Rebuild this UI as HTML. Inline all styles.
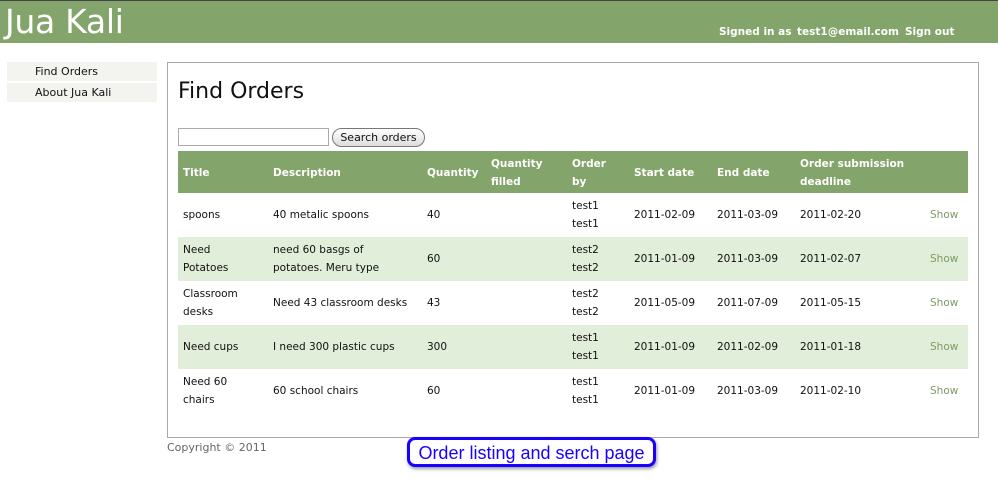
<!DOCTYPE html>
<html><head><meta charset="utf-8"><style>
*{margin:0;padding:0;box-sizing:border-box}
body{width:998px;height:479px;background:#fff;font-family:"DejaVu Sans","Liberation Sans",sans-serif;font-size:10.5px;color:#111;position:relative;overflow:hidden}
.hdr{position:absolute;left:0;top:0;width:998px;height:43px;background:#83a46a;border-top:1px solid #444}
.logo{position:absolute;left:5px;top:1px;font-size:33px;color:#fff;letter-spacing:-0.3px}
.sign{position:absolute;top:25px;color:#fff;font-weight:bold;font-size:10.5px;letter-spacing:0px}
.nav{position:absolute;left:7px;width:150px;height:19px;background:#f3f3ef;padding-left:28px;line-height:19px;font-size:11px}
.box{position:absolute;left:167px;top:62px;width:812px;height:376px;border:1px solid #aaa}
h1{position:absolute;left:178px;top:79px;font-size:22px;font-weight:normal;color:#111}
.inp{position:absolute;left:178px;top:128px;width:151px;height:18px;border:1px solid #aaa}
.btn{position:absolute;left:332px;top:128px;width:93px;height:19px;border:1px solid #777;border-radius:10px;background:linear-gradient(#fff,#ddd);font-size:11px;text-align:center;line-height:17px}
.th{position:absolute;left:178px;top:151px;width:790px;height:42px;background:#83a46a}
.row{position:absolute;left:178px;width:790px;height:44px}
.alt{background:#e1eed9}
.c{position:absolute;line-height:18px;margin-top:1px}
.w{color:#fff;font-weight:bold}
.show{color:#7f9a63}
.copy{position:absolute;left:167px;top:441px;color:#666;font-size:11px}
.call{position:absolute;left:407px;top:437px;width:249px;height:30px;border:3px solid #1a00ff;border-radius:8px;color:#1a00ff;font-family:"Liberation Sans",sans-serif;font-size:18px;text-align:center;line-height:27px;background:#fff;box-shadow:1px 2px 3px #999}
</style></head><body>
<div class="hdr"><div class="logo">Jua Kali</div>
<div class="sign" style="left:719px">Signed in as</div>
<div class="sign" style="left:797px">test1@email.com</div>
<div class="sign" style="left:905px">Sign out</div></div>
<div class="nav" style="top:62px">Find Orders</div>
<div class="nav" style="top:83px">About Jua Kali</div>
<div class="box"></div>
<h1>Find Orders</h1>
<div class="inp"></div><div class="btn">Search orders</div>
<div class="th"></div>
<div class="c w" style="left:183px;top:163px">Title</div>
<div class="c w" style="left:273px;top:163px">Description</div>
<div class="c w" style="left:427px;top:163px">Quantity</div>
<div class="c w" style="left:491px;top:154px">Quantity<br>filled</div>
<div class="c w" style="left:572px;top:154px">Order<br>by</div>
<div class="c w" style="left:634px;top:163px">Start date</div>
<div class="c w" style="left:717px;top:163px">End date</div>
<div class="c w" style="left:800px;top:154px">Order submission<br>deadline</div>

<div class="row" style="top:193px"></div>
<div class="row alt" style="top:237px"></div>
<div class="row" style="top:281px"></div>
<div class="row alt" style="top:325px"></div>
<div class="row" style="top:369px"></div>

<div class="c" style="left:183px;top:205px">spoons</div>
<div class="c" style="left:273px;top:205px">40 metalic spoons</div>
<div class="c" style="left:427px;top:205px">40</div>
<div class="c" style="left:572px;top:196px">test1<br>test1</div>
<div class="c" style="left:634px;top:205px">2011-02-09</div>
<div class="c" style="left:717px;top:205px">2011-03-09</div>
<div class="c" style="left:800px;top:205px">2011-02-20</div>
<div class="c show" style="left:930px;top:205px">Show</div>

<div class="c" style="left:183px;top:240px">Need<br>Potatoes</div>
<div class="c" style="left:273px;top:240px">need 60 basgs of<br>potatoes. Meru type</div>
<div class="c" style="left:427px;top:249px">60</div>
<div class="c" style="left:572px;top:240px">test2<br>test2</div>
<div class="c" style="left:634px;top:249px">2011-01-09</div>
<div class="c" style="left:717px;top:249px">2011-03-09</div>
<div class="c" style="left:800px;top:249px">2011-02-07</div>
<div class="c show" style="left:930px;top:249px">Show</div>

<div class="c" style="left:183px;top:284px">Classroom<br>desks</div>
<div class="c" style="left:273px;top:293px">Need 43 classroom desks</div>
<div class="c" style="left:427px;top:293px">43</div>
<div class="c" style="left:572px;top:284px">test2<br>test2</div>
<div class="c" style="left:634px;top:293px">2011-05-09</div>
<div class="c" style="left:717px;top:293px">2011-07-09</div>
<div class="c" style="left:800px;top:293px">2011-05-15</div>
<div class="c show" style="left:930px;top:293px">Show</div>

<div class="c" style="left:183px;top:337px">Need cups</div>
<div class="c" style="left:273px;top:337px">I need 300 plastic cups</div>
<div class="c" style="left:427px;top:337px">300</div>
<div class="c" style="left:572px;top:328px">test1<br>test1</div>
<div class="c" style="left:634px;top:337px">2011-01-09</div>
<div class="c" style="left:717px;top:337px">2011-02-09</div>
<div class="c" style="left:800px;top:337px">2011-01-18</div>
<div class="c show" style="left:930px;top:337px">Show</div>

<div class="c" style="left:183px;top:372px">Need 60<br>chairs</div>
<div class="c" style="left:273px;top:381px">60 school chairs</div>
<div class="c" style="left:427px;top:381px">60</div>
<div class="c" style="left:572px;top:372px">test1<br>test1</div>
<div class="c" style="left:634px;top:381px">2011-01-09</div>
<div class="c" style="left:717px;top:381px">2011-03-09</div>
<div class="c" style="left:800px;top:381px">2011-02-10</div>
<div class="c show" style="left:930px;top:381px">Show</div>

<div class="copy">Copyright © 2011</div>
<div class="call">Order listing and serch page</div>
</body></html>
